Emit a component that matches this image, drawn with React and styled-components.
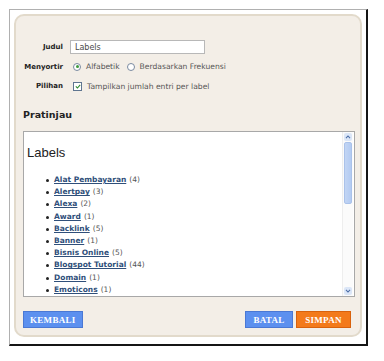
import React from 'react'
import styled, { createGlobalStyle } from 'styled-components'

const GlobalStyle = createGlobalStyle`
  html, body { margin: 0; padding: 0; background: #fff; }
  body { font-family: "DejaVu Sans", Verdana, sans-serif; }
`

const Frame = styled.div`
  width: 378px;
  height: 357px;
  border-right: 2px solid #8c8c8c;
  border-bottom: 2px solid #a0a0a0;
  padding: 9px 0 0 9px;
  box-sizing: content-box;
`

const Shot = styled.div`
  width: 359px;
  height: 337px;
  background: #fff;
  border-top: 1px solid #b0b0b0;
  border-left: 1px solid #b0b0b0;
  border-right: 2px solid #151515;
  border-bottom: 2px solid #151515;
  padding: 4px;
  box-sizing: border-box;
`

const Panel = styled.div`
  height: 323px;
  box-sizing: border-box;
  background: #f3eee7;
  border: 2px solid #e2dacb;
  border-radius: 10px;
  padding: 24px 7px 0 7px;
  display: flex;
  flex-direction: column;
`

const Form = styled.div`
  display: grid;
  grid-template-columns: 40px 1fr;
  column-gap: 7px;
  row-gap: 5.5px;
  grid-auto-rows: 14px;
  align-items: center;
`

const FieldLabel = styled.div`
  font-size: 7px;
  font-weight: bold;
  color: #222;
  text-align: right;
`

const TextInput = styled.div`
  width: 135px;
  height: 14px;
  box-sizing: border-box;
  border: 1px solid #b8b8b8;
  background: #fff;
  font-size: 8px;
  color: #4a4a4a;
  padding: 0 4px;
  display: flex;
  align-items: center;
`

const Options = styled.div`
  display: flex;
  align-items: center;
  gap: ${p => p.gap || 6}px;
  padding-left: ${p => p.indent || 3}px;
`

const Option = styled.label`
  display: flex;
  align-items: center;
  gap: 5px;
  font-size: 7.6px;
  color: #555;
`

const Radio = styled.span`
  width: 6px;
  height: 6px;
  border-radius: 50%;
  border: 1px solid #7a8aa0;
  background: #fff;
  display: inline-flex;
  align-items: center;
  justify-content: center;
  &::after {
    content: "";
    width: 3px;
    height: 3px;
    border-radius: 50%;
    background: ${p => (p.checked ? '#3d9a3d' : 'transparent')};
  }
`

const Check = styled.span`
  width: 7px;
  height: 7px;
  border: 1px solid #5f7590;
  background: #fff;
  display: inline-flex;
  align-items: center;
  justify-content: center;
`

const SectionTitle = styled.div`
  margin-top: 15px;
  font-size: 9.5px;
  font-weight: bold;
  color: #222;
  line-height: 14px;
`

const Preview = styled.div`
  margin-top: 9px;
  width: 332px;
  height: 166px;
  box-sizing: border-box;
  border: 1px solid #a8a8a8;
  background: #fff;
  display: flex;
`

const PreviewBody = styled.div`
  flex: 1;
  padding: 13px 0 0 3px;
  overflow: hidden;
`

const WidgetTitle = styled.h2`
  margin: 0 0 14px 0;
  font-family: "Liberation Sans", Arial, sans-serif;
  font-weight: normal;
  font-size: 13px;
  color: #222;
`

const LabelList = styled.ul`
  margin: 0;
  padding: 0 0 0 19px;
  list-style: none;
`

const LabelItem = styled.li`
  position: relative;
  font-size: 7.5px;
  line-height: 12.2px;
  color: #555;
  padding-left: 8px;
  &::before {
    content: "";
    position: absolute;
    left: 0;
    top: 5px;
    width: 3px;
    height: 3px;
    border-radius: 50%;
    background: #222;
  }
`

const LabelLink = styled.a`
  color: #2f4f7a;
  font-weight: bold;
  text-decoration: underline;
  margin-right: 3px;
`

const Scrollbar = styled.div`
  width: 10px;
  margin-right: 1px;
  display: flex;
  flex-direction: column;
  background: #fbfbfb;
  border-left: 1px solid #eee;
`

const Arrow = styled.div`
  height: 8px;
  margin: 1px;
  border-radius: 2px;
  background: #dbe6f7;
  display: flex;
  align-items: center;
  justify-content: center;
`

const Thumb = styled.div`
  height: 62px;
  margin: 0 1px;
  border-radius: 2px;
  background: linear-gradient(to right, #c2d5f4, #b3cbf2);
  border: 1px solid #aac2ea;
  box-sizing: border-box;
`

const Track = styled.div`
  flex: 1;
`

const ButtonRow = styled.div`
  margin-top: 14px;
  display: flex;
  align-items: center;
  gap: 3px;
  padding-right: 2px;
`

const Spacer = styled.div`
  flex: 1;
`

const Button = styled.button`
  height: 17px;
  min-width: ${p => p.w}px;
  box-sizing: border-box;
  border: 1px solid ${p => (p.orange ? '#d8620d' : '#4a78d4')};
  background: ${p => (p.orange ? '#f37a1b' : '#5c90ef')};
  color: #fff;
  font-family: "Liberation Serif", "Times New Roman", serif;
  font-weight: bold;
  font-size: 9px;
  letter-spacing: 0.3px;
  padding: 0 6px;
  cursor: pointer;
`

const labels = [
  ['Alat Pembayaran', 4],
  ['Alertpay', 3],
  ['Alexa', 2],
  ['Award', 1],
  ['Backlink', 5],
  ['Banner', 1],
  ['Bisnis Online', 5],
  ['Blogspot Tutorial', 44],
  ['Domain', 1],
  ['Emoticons', 1],
]

const Chevron = ({ up }) => (
  <svg width="6" height="4" viewBox="0 0 6 4">
    <path d={up ? 'M1 3.2 L3 1 L5 3.2' : 'M1 0.8 L3 3 L5 0.8'} fill="none" stroke="#4d6fa8" strokeWidth="1.1" />
  </svg>
)

export default function App() {
  return (
    <>
      <GlobalStyle />
      <Frame>
        <Shot>
          <Panel>
            <Form>
              <FieldLabel>Judul</FieldLabel>
              <TextInput>Labels</TextInput>
              <FieldLabel>Menyortir</FieldLabel>
              <Options gap={7} indent={3}>
                <Option><Radio checked />Alfabetik</Option>
                <Option><Radio />Berdasarkan Frekuensi</Option>
              </Options>
              <FieldLabel>Pilihan</FieldLabel>
              <Options indent={3}>
                <Option>
                  <Check>
                    <svg width="6" height="5" viewBox="0 0 6 5">
                      <path d="M0.8 2.4 L2.4 4 L5.2 0.8" fill="none" stroke="#2f8a2f" strokeWidth="1.1" />
                    </svg>
                  </Check>
                  Tampilkan jumlah entri per label
                </Option>
              </Options>
            </Form>
            <SectionTitle>Pratinjau</SectionTitle>
            <Preview>
              <PreviewBody>
                <WidgetTitle>Labels</WidgetTitle>
                <LabelList>
                  {labels.map(([name, count]) => (
                    <LabelItem key={name}>
                      <LabelLink>{name}</LabelLink>({count})
                    </LabelItem>
                  ))}
                </LabelList>
              </PreviewBody>
              <Scrollbar>
                <Arrow><Chevron up /></Arrow>
                <Thumb />
                <Track />
                <Arrow><Chevron /></Arrow>
              </Scrollbar>
            </Preview>
            <ButtonRow>
              <Button w={59}>KEMBALI</Button>
              <Spacer />
              <Button w={48}>BATAL</Button>
              <Button w={55} orange>SIMPAN</Button>
            </ButtonRow>
          </Panel>
        </Shot>
      </Frame>
    </>
  )
}
